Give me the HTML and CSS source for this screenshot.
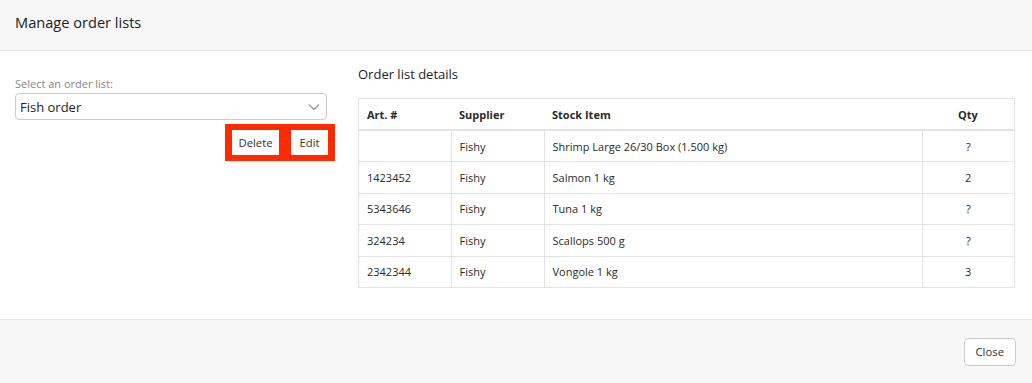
FILE: index.html
```html
<!DOCTYPE html>
<html>
<head>
    <title>Manage order lists</title>
    <meta charset="UTF-8">
    <meta name="viewport" content="width=device-width, initial-scale=1">
    <link rel="stylesheet" href="styles.css">
</head>
<body>
    <div class="modal">
        <div class="modal-header">
            <h1>Manage order lists</h1>
        </div>

        <div class="modal-body">
            <div class="list-picker">
                <label for="orderList">Select an order list:</label>
                <div class="select-wrap">
                    <select id="orderList">
                        <option>Fish order</option>
                    </select>
                    <svg class="chevron" width="12" height="8" viewBox="0 0 12 8">
                        <path d="M1 1.5 L6 6.5 L11 1.5" fill="none" stroke="#999" stroke-width="1.3"/>
                    </svg>
                </div>
                <div class="actions">
                    <div class="highlight">
                        <button type="button" class="btn">Delete</button>
                        <button type="button" class="btn btn-edit">Edit</button>
                    </div>
                </div>
            </div>

            <div class="details">
                <h2>Order list details</h2>
                <table class="order-table">
                    <thead>
                        <tr>
                            <th class="col-art">Art. #</th>
                            <th class="col-supplier">Supplier</th>
                            <th>Stock Item</th>
                            <th class="col-qty">Qty</th>
                        </tr>
                    </thead>
                    <tbody>
                        <tr><td></td><td>Fishy</td><td>Shrimp Large 26/30 Box (1.500 kg)</td><td class="qty">?</td></tr>
                        <tr><td>1423452</td><td>Fishy</td><td>Salmon 1 kg</td><td class="qty">2</td></tr>
                        <tr><td>5343646</td><td>Fishy</td><td>Tuna 1 kg</td><td class="qty">?</td></tr>
                        <tr><td>324234</td><td>Fishy</td><td>Scallops 500 g</td><td class="qty">?</td></tr>
                        <tr><td>2342344</td><td>Fishy</td><td>Vongole 1 kg</td><td class="qty">3</td></tr>
                    </tbody>
                </table>
            </div>
        </div>

        <div class="modal-footer">
            <button type="button" class="btn">Close</button>
        </div>
    </div>
</body>
</html>
```

FILE: styles.css
```css
body {
    font-family: "Open Sans", Arial, sans-serif;
    margin: 0;
    color: #333;
    background-color: #fff;
}

.modal {
    height: 383px;
    display: flex;
    flex-direction: column;
}

.modal-header {
    height: 51px;
    box-sizing: border-box;
    padding: 12px 15px 0 15px;
    background-color: #f7f7f7;
    border-bottom: 1px solid #e5e5e5;
}

.modal-header h1 {
    margin: 0;
    font-size: 14.6px;
    line-height: 20px;
    font-weight: normal;
    color: #222;
}

.modal-body {
    flex: 1;
    display: grid;
    grid-template-columns: 312px 1fr;
    column-gap: 31px;
    padding: 14px 17px 0 15px;
    align-items: start;
}

label {
    display: block;
    font-size: 11px;
    line-height: 15px;
    color: #888;
    margin-top: 11px;
    margin-bottom: 2px;
}

.select-wrap {
    position: relative;
}

select {
    display: block;
    width: 100%;
    height: 27px;
    padding: 0 4px;
    font-family: inherit;
    font-size: 13px;
    color: #222;
    background-color: #fff;
    border: 1px solid #ccc;
    border-radius: 4px;
    appearance: none;
    -webkit-appearance: none;
}

.chevron {
    position: absolute;
    right: 7px;
    top: 10px;
}

.actions {
    display: flex;
    justify-content: flex-end;
    margin-top: 4px;
    margin-right: -8px;
}

.highlight {
    display: flex;
    gap: 12px;
    padding: 6px 7px;
    background-color: #ff2a00;
}

.btn {
    font-family: inherit;
    font-size: 11.3px;
    color: #333;
    background-color: #fff;
    border: 1px solid #ccc;
    border-radius: 3px;
    padding: 0 6px;
    height: 25px;
    cursor: pointer;
}

.highlight .btn {
    border: none;
    border-radius: 0;
    width: 47px;
    padding: 0;
}

.highlight .btn-edit {
    width: 37px;
}

.details h2 {
    margin: 0 0 15px 0;
    font-size: 13px;
    line-height: 18px;
    font-weight: normal;
    color: #222;
}

.order-table {
    width: 100%;
    border-collapse: collapse;
    font-size: 11px;
    color: #2a2a2a;
}

.order-table th,
.order-table td {
    border: 1px solid #e3e3e3;
    padding: 0 8px;
    height: 30.4px;
    text-align: left;
}

.order-table th {
    height: 30px;
    font-weight: bold;
    border-left: none;
    border-right: none;
    border-bottom: 2px solid #e3e3e3;
}

.order-table th:first-child {
    border-left: 1px solid #e3e3e3;
}

.order-table th:last-child {
    border-right: 1px solid #e3e3e3;
}

.col-art {
    width: 76px;
}

.col-supplier {
    width: 77px;
}

.col-qty {
    width: 76px;
}

.order-table .col-qty,
.order-table .qty {
    text-align: center;
}

.modal-footer {
    height: 63px;
    padding: 0 16px;
    display: flex;
    align-items: center;
    justify-content: flex-end;
    background-color: #f7f7f7;
    border-top: 1px solid #e5e5e5;
}

.modal-footer .btn {
    height: 28px;
    padding: 0 11px;
    border-radius: 4px;
}
```
